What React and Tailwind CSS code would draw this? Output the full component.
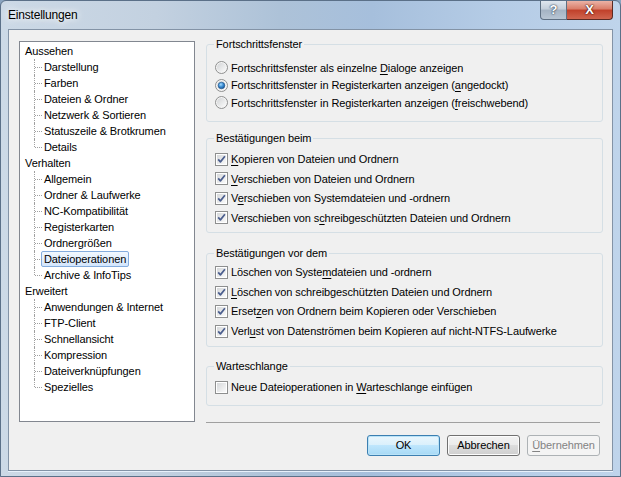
import React from 'react';

const TREE = [
  {
    label: 'Aussehen',
    children: ['Darstellung', 'Farben', 'Dateien & Ordner', 'Netzwerk & Sortieren', 'Statuszeile & Brotkrumen', 'Details'],
  },
  {
    label: 'Verhalten',
    children: ['Allgemein', 'Ordner & Laufwerke', 'NC-Kompatibilität', 'Registerkarten', 'Ordnergrößen', 'Dateioperationen', 'Archive & InfoTips'],
  },
  {
    label: 'Erweitert',
    children: ['Anwendungen & Internet', 'FTP-Client', 'Schnellansicht', 'Kompression', 'Dateiverknüpfungen', 'Spezielles'],
  },
];

const SELECTED = 'Dateioperationen';

// "&X" marks the access key, like in a Windows resource file
function Mnemonic({ text }) {
  const i = text.indexOf('&');
  if (i < 0) return text;
  return (
    <>
      {text.slice(0, i)}
      <span className="underline decoration-1 underline-offset-[2px]">{text[i + 1]}</span>
      {text.slice(i + 2)}
    </>
  );
}

function Radio({ checked }) {
  return (
    <svg width="13" height="13" viewBox="0 0 13 13" className="shrink-0">
      <defs>
        <linearGradient id="rg-bg" x1="0" y1="0" x2="1" y2="1">
          <stop offset="0" stopColor="#d2d4d6" />
          <stop offset="1" stopColor="#fbfbfb" />
        </linearGradient>
        <radialGradient id="rg-dot" cx="0.4" cy="0.35" r="0.7">
          <stop offset="0" stopColor="#a8dcff" />
          <stop offset="0.5" stopColor="#3c8ed4" />
          <stop offset="1" stopColor="#14508f" />
        </radialGradient>
      </defs>
      <circle cx="6.5" cy="6.5" r="6" fill="#f4f4f4" stroke="#8e8f8f" />
      <circle cx="6.5" cy="6.5" r="4.5" fill="url(#rg-bg)" />
      {checked && <circle cx="6.5" cy="6.5" r="3.3" fill="url(#rg-dot)" stroke="#1b4f86" strokeWidth="0.6" />}
    </svg>
  );
}

function Check({ checked }) {
  return (
    <svg width="13" height="13" viewBox="0 0 13 13" className="shrink-0">
      <defs>
        <linearGradient id="cb-bg" x1="0" y1="0" x2="1" y2="1">
          <stop offset="0" stopColor="#d6d8da" />
          <stop offset="1" stopColor="#fafafa" />
        </linearGradient>
      </defs>
      <rect x="0.5" y="0.5" width="12" height="12" fill="#fff" stroke="#8e8f8f" />
      <rect x="2" y="2" width="9" height="9" fill="url(#cb-bg)" />
      {checked && (
        <path d="M3.2 6.4 L5.4 8.9 L9.9 3.3" fill="none" stroke="#4b5e8e" strokeWidth="1.7" strokeLinejoin="round" />
      )}
    </svg>
  );
}

function Group({ title, className, children }) {
  return (
    <fieldset className={`rounded-[3px] border border-[#d5dfe5] ${className}`}>
      <legend className="ml-[7px] px-[2px] leading-[15px]">{title}</legend>
      {children}
    </fieldset>
  );
}

function Row({ kind, checked, label, h }) {
  return (
    <div className={`flex items-center gap-[3px] pl-[8px] ${h}`}>
      {kind === 'radio' ? <Radio checked={checked} /> : <Check checked={checked} />}
      <span className="whitespace-nowrap">
        <Mnemonic text={label} />
      </span>
    </div>
  );
}

function TreeChild({ label, last }) {
  const selected = label === SELECTED;
  return (
    <div className="flex h-[16px] items-center pl-[14px]">
      <div className="relative h-full w-[7px] shrink-0">
        <span
          className={`absolute left-0 top-0 border-l border-dotted border-[#a0a0a0] ${last ? 'h-[8px]' : 'h-full'}`}
        />
        <span className="absolute left-[1px] top-[8px] w-[7px] border-t border-dotted border-[#a0a0a0]" />
      </div>
      <span
        className={`whitespace-nowrap rounded-[2px] border px-[2px] leading-[14px] ${
          selected
            ? 'border-[#84acdd] bg-[linear-gradient(#f2f8fe,#d3e6fd)]'
            : 'border-transparent'
        }`}
      >
        {label}
      </span>
    </div>
  );
}

function Button({ children, variant }) {
  const styles = {
    default:
      'border-[#3c7fb1] bg-[linear-gradient(#eaf6fd_0%,#d9f0fc_50%,#bee6fd_50%,#a7d9f5_100%)] shadow-[inset_0_0_0_1px_#b9e3f8]',
    normal:
      'border-[#707070] bg-[linear-gradient(#f2f2f2_0%,#ebebeb_50%,#dddddd_50%,#cfcfcf_100%)] shadow-[inset_0_0_0_1px_#fcfcfc]',
    disabled: 'border-[#adb2b5] bg-[#f4f4f4] text-[#838383]',
  };
  return (
    <button
      type="button"
      className={`h-[21px] w-[73px] rounded-[3px] border leading-none ${styles[variant]}`}
    >
      {children}
    </button>
  );
}

export default function App() {
  return (
    <div className="h-[477px] w-[621px] overflow-hidden bg-[#8aa4c0] font-['Liberation_Sans',Arial,sans-serif] text-[11px] tracking-[-0.1px] text-black">
      <div className="flex h-full flex-col rounded-t-[6px] border border-[#5b7088] bg-[linear-gradient(90deg,#ccd9e6_0%,#c3d1e0_25%,#adc2d8_45%,#a6bfdc_60%,#b5cce6_80%,#bfd4eb_100%)]">
        {/* title bar */}
        <div className="flex h-[28px] shrink-0 items-start justify-between">
          <span className="ml-[7px] mt-[7px] text-[12px] leading-[15px] tracking-[-0.2px] [text-shadow:0_0_6px_#fff,0_0_10px_#fff]">
            Einstellungen
          </span>
          <div className="mr-[7px] flex">
            <div className="flex h-[19px] w-[27px] items-center justify-center rounded-bl-[4px] border border-t-0 border-[#5d6f82] bg-[linear-gradient(#dfe6ee_0%,#c3ceda_45%,#a4b3c3_50%,#b8c6d4_100%)] text-[13px] font-bold text-white [text-shadow:0_0_2px_#26384c,0_0_1px_#26384c]">
              ?
            </div>
            <div className="flex h-[19px] w-[46px] items-center justify-center rounded-br-[4px] border border-l-0 border-t-0 border-[#5a2a23] bg-[linear-gradient(#ebb3a6_0%,#d97c68_45%,#c0402a_50%,#d0654f_100%)] text-[13px] font-bold text-white [text-shadow:0_0_2px_#3a0e08,0_0_1px_#3a0e08]">
              X
            </div>
          </div>
        </div>

        {/* client area */}
        <div className="mx-[7px] mb-[5px] flex flex-1 border border-[#8393a6] bg-[#f0f0f0] shadow-[0_1px_0_#e8f1fb]">
          <div className="ml-[10px] mt-[11px] h-[381px] w-[176px] shrink-0 border border-[#828790] bg-white pt-[1px]">
            {TREE.map((node) => (
              <div key={node.label}>
                <div className="flex h-[16px] items-center pl-[2px]">
                  <span className="border border-transparent px-[2px] leading-[14px]">{node.label}</span>
                </div>
                {node.children.map((c, i) => (
                  <TreeChild key={c} label={c} last={i === node.children.length - 1} />
                ))}
              </div>
            ))}
          </div>

          <div className="ml-[11px] flex w-[397px] flex-col pt-[7px]">
            <Group title="Fortschrittsfenster" className="pb-[9px]">
              <div className="pt-[7px]">
                <Row kind="radio" h="h-[17.5px]" label="Fortschrittsfenster als einzelne &Dialoge anzeigen" />
                <Row kind="radio" h="h-[17.5px]" checked label="Fortschrittsfenster in Registerkarten anzeigen (&angedockt)" />
                <Row kind="radio" h="h-[17.5px]" label="Fortschrittsfenster in Registerkarten anzeigen (&freischwebend)" />
              </div>
            </Group>

            <Group title="Bestätigungen beim" className="mt-[9px] pb-[4px]">
              <div className="pt-[4px]">
                <Row kind="check" h="h-[19.5px]" checked label="&Kopieren von Dateien und Ordnern" />
                <Row kind="check" h="h-[19.5px]" checked label="&Verschieben von Dateien und Ordnern" />
                <Row kind="check" h="h-[19.5px]" checked label="V&erschieben von Systemdateien und -ordnern" />
                <Row kind="check" h="h-[19.5px]" checked label="Verschieben von s&chreibgeschützten Dateien und Ordnern" />
              </div>
            </Group>

            <Group title="Bestätigungen vor dem" className="mt-[13px] pb-[5px]">
              <div className="pt-[2px]">
                <Row kind="check" h="h-[19.7px]" checked label="Löschen von Syste&mdateien und -ordnern" />
                <Row kind="check" h="h-[19.7px]" checked label="&Löschen von schreibgeschützten Dateien und Ordnern" />
                <Row kind="check" h="h-[19.7px]" checked label="Erset&zen von Ordnern beim Kopieren oder Verschieben" />
                <Row kind="check" h="h-[19.7px]" checked label="Verl&ust von Datenströmen beim Kopieren auf nicht-NTFS-Laufwerke" />
              </div>
            </Group>

            <Group title="Warteschlange" className="mt-[12px] pb-[8px]">
              <div className="pt-[3px]">
                <Row kind="check" h="h-[20px]" label="Neue Dateioperationen in &Warteschlange einfügen" />
              </div>
            </Group>

            <div className="mr-[3px] mt-[16px] border-t border-[#a0a0a0]" />

            <div className="mr-[3px] mt-[12px] flex justify-end gap-[7px]">
              <Button variant="default">OK</Button>
              <Button variant="normal">Abbrechen</Button>
              <Button variant="disabled">
                <Mnemonic text="&Übernehmen" />
              </Button>
            </div>
          </div>
        </div>
      </div>
    </div>
  );
}
